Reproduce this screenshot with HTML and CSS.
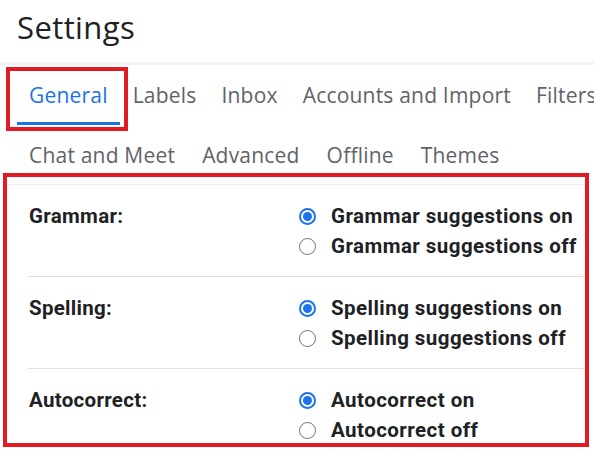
FILE: index.html
```html
<!DOCTYPE html>
<html lang="en">
<head>
<meta charset="utf-8">
<title>Settings</title>
<link rel="stylesheet" href="styles.css">
</head>
<body>
<div class="page">
  <header class="header">
    <h1 class="title">Settings</h1>
  </header>
  <nav class="tabs tabs-first">
    <div class="tab tab-active">General<span class="annot annot-tab"></span></div>
    <div class="tab">Labels</div>
    <div class="tab">Inbox</div>
    <div class="tab">Accounts and Import</div>
    <div class="tab">Filters</div>
  </nav>
  <nav class="tabs tabs-second">
    <div class="tab">Chat and Meet</div>
    <div class="tab">Advanced</div>
    <div class="tab">Offline</div>
    <div class="tab">Themes</div>
  </nav>
  <section class="panel">
    <div class="table">
      <div class="setting">
        <div class="label">Grammar:</div>
        <div class="options">
          <div class="option"><span class="radio radio-on"></span>Grammar suggestions on</div>
          <div class="option"><span class="radio"></span>Grammar suggestions off</div>
        </div>
      </div>
      <div class="setting">
        <div class="label">Spelling:</div>
        <div class="options">
          <div class="option"><span class="radio radio-on"></span>Spelling suggestions on</div>
          <div class="option"><span class="radio"></span>Spelling suggestions off</div>
        </div>
      </div>
      <div class="setting">
        <div class="label">Autocorrect:</div>
        <div class="options">
          <div class="option"><span class="radio radio-on"></span>Autocorrect on</div>
          <div class="option"><span class="radio"></span>Autocorrect off</div>
        </div>
      </div>
    </div>
  </section>
</div>
</body>
</html>
```

FILE: styles.css
```css
* {
  box-sizing: border-box;
}

html, body {
  margin: 0;
  padding: 0;
  background: #ffffff;
}

body {
  width: 594px;
  height: 453px;
  overflow: hidden;
  font-family: Roboto, "Liberation Sans", Arial, sans-serif;
  color: #202124;
}

.page {
  width: 594px;
}

.header {
  height: 65px;
  padding: 7px 0 0 17px;
  border-bottom: 3px solid #f1f3f4;
}

.title {
  margin: 0;
  font-family: "Open Sans", Roboto, sans-serif;
  font-size: 31px;
  letter-spacing: 0.4px;
  line-height: 40px;
  font-weight: 400;
  color: #202124;
}

.tabs {
  display: flex;
  white-space: nowrap;
  padding-left: 16.5px;
}

.tabs-second {
  margin-top: 18px;
  padding-left: 15.5px;
}

.tab {
  position: relative;
  flex: none;
  font-family: "Open Sans", Roboto, sans-serif;
  font-size: 21px;
  letter-spacing: 0.2px;
  line-height: 24px;
  color: #5f6368;
  padding: 0 12.5px;
}

.tabs-second .tab {
  padding: 0 13.5px;
}

.tabs-first .tab {
  padding-top: 18px;
  padding-bottom: 18px;
}

.tab-active {
  color: #1a73e8;
  padding-bottom: 15px !important;
  border-bottom: 3px solid #1a73e8;
}

.annot {
  position: absolute;
  border: 4px solid #e01b24;
  pointer-events: none;
}

.annot-tab {
  left: -11px;
  right: -8px;
  top: 2px;
  bottom: -9px;
}

.panel {
  margin: 6px 0 0 3px;
  width: 586px;
  height: 274px;
  border: 4px solid #e01b24;
  overflow: hidden;
}

.table {
  margin-top: 7px;
  border-top: 1px solid #eceff1;
}

.setting {
  display: flex;
  margin-left: 21px;
  padding: 16px 0 15px;
  border-bottom: 1px solid #e0e0e0;
}

.label {
  width: 271px;
  flex: none;
  padding-left: 1px;
  font-size: 20.5px;
  letter-spacing: 0.3px;
  line-height: 30px;
  font-weight: 700;
  color: #202124;
}

.options {
  display: flex;
  flex-direction: column;
}

.option {
  display: flex;
  align-items: center;
  height: 30px;
  font-size: 20.5px;
  letter-spacing: 0.45px;
  font-weight: 700;
  color: #202124;
  white-space: nowrap;
}

.radio {
  flex: none;
  width: 17px;
  height: 17px;
  margin-right: 15px;
  border-radius: 50%;
  border: 1.5px solid #6f6f6f;
  position: relative;
}

.radio-on {
  border: 2px solid #1a73e8;
}

.radio-on::after {
  content: "";
  position: absolute;
  left: 2px;
  top: 2px;
  width: 9px;
  height: 9px;
  border-radius: 50%;
  background: #1a73e8;
}
```
